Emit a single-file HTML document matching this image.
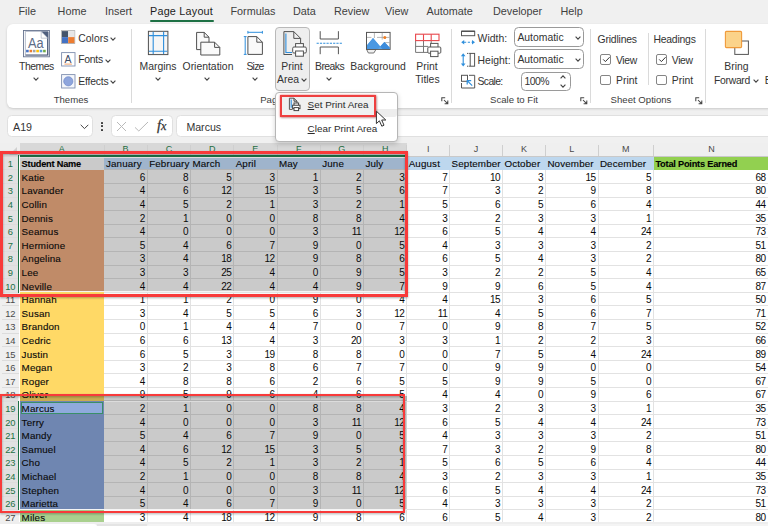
<!DOCTYPE html>
<html lang="en">
<head>
<meta charset="utf-8">
<title>Excel - Set Print Area</title>
<style>
html,body{margin:0;padding:0;}
body{width:768px;height:526px;overflow:hidden;background:#f0f0f0;position:relative;font-family:"Liberation Sans",sans-serif;color:#3a3a3a;}
#app{position:absolute;left:0;top:0;width:768px;height:526px;overflow:hidden;}
#app div,#app svg{position:absolute;}
#sheet{left:0;top:0;width:768px;height:526px;}
.tab{top:3.2px;height:16px;line-height:16px;font-size:10.8px;color:#404040;white-space:nowrap;}
.lbl{font-size:10.4px;line-height:13px;color:#333;white-space:nowrap;text-align:center;}
.lbl.l{text-align:left;}
.grp{font-size:9.6px;line-height:12px;color:#3c3c3c;white-space:nowrap;text-align:center;}
.sep{width:1px;background:#dadada;}
.ch{height:12px;line-height:12px;font-size:9px;text-align:center;}
.rn{left:2.5px;width:15.5px;height:13.6px;line-height:15.6px;font-size:9.4px;text-align:center;letter-spacing:-.1px;}
.c{height:13.6px;line-height:15.6px;font-size:9.2px;color:#0a0a0a;white-space:nowrap;}
.c.t{font-size:9.8px;letter-spacing:.15px;line-height:15.8px;-webkit-text-stroke:.12px #0a0a0a;}
.c.n{text-align:right;font-size:10px;letter-spacing:-.45px;line-height:15.2px;}
.c.b{font-weight:bold;font-size:9.2px;letter-spacing:-.2px;color:#000;line-height:16.4px;}
.inp{border:1px solid #9a9a9a;border-radius:4.5px;box-sizing:border-box;background:#fff;}
.cb{width:10.5px;height:10.5px;border:1px solid #858585;border-radius:2px;box-sizing:border-box;background:#fff;}
</style>
</head>
<body>
<div id="app">

<!-- ======= TAB BAR ======= -->
<div class="tab" style="left:18.5px">File</div>
<div class="tab" style="left:57.6px">Home</div>
<div class="tab" style="left:105px">Insert</div>
<div class="tab" style="left:150px;color:#1c1c1c;letter-spacing:.22px">Page Layout</div>
<div style="left:150px;top:20.2px;width:64px;height:1.8px;background:#1e7145;border-radius:1px"></div>
<div class="tab" style="left:230.5px">Formulas</div>
<div class="tab" style="left:293px">Data</div>
<div class="tab" style="left:334px">Review</div>
<div class="tab" style="left:385px">View</div>
<div class="tab" style="left:426.5px">Automate</div>
<div class="tab" style="left:493px">Developer</div>
<div class="tab" style="left:560.5px">Help</div>

<!-- ======= RIBBON PANEL ======= -->
<div style="left:7px;top:23.8px;width:780px;height:84.6px;background:#fff;border-radius:6px;box-shadow:0 1px 2.5px rgba(0,0,0,.16)"></div>

<!-- Themes group -->
<svg style="left:22px;top:28.6px" width="30" height="30" viewBox="0 0 30 30">
  <rect x="1.5" y="1.5" width="25.9" height="26.3" fill="#f4f5f8" stroke="#66738f" stroke-width=".9"/>
  <rect x="3.3" y="2.7" width="22.6" height="23.5" fill="#fff" stroke="#9aa4b8" stroke-width=".6"/>
  <path d="M25.7 3 V26 H3.6" fill="none" stroke="#4c5b78" stroke-width="1.2"/>
  <path d="M19.2 2.6 H26.1 V9.4 Z" fill="#4f5f7e"/>
  <path d="M19.2 2.6 V9.2 H25.9 Z" fill="#fff" stroke="#8c97ad" stroke-width=".5"/>
  <text x="5.9" y="18.7" font-family="Liberation Sans, sans-serif" font-size="15.4" fill="#5d6c86" textLength="15.6" lengthAdjust="spacingAndGlyphs">Aa</text>
  <rect x="4.1" y="20.8" width="2.6" height="2.5" fill="#4472c4"/>
  <rect x="7.5" y="20.8" width="2.6" height="2.5" fill="#ed7d31"/>
  <rect x="10.9" y="20.8" width="2.6" height="2.5" fill="#a5a5a5"/>
  <rect x="14.3" y="20.8" width="2.6" height="2.5" fill="#ffc000"/>
  <rect x="17.7" y="20.8" width="2.6" height="2.5" fill="#5b9bd5"/>
  <rect x="21.1" y="20.8" width="2.6" height="2.5" fill="#70ad47"/>
</svg>
<div class="lbl" style="left:11.4px;top:59.8px;width:50px;letter-spacing:-.5px">Themes</div>
<svg class="chev" style="left:33px;top:77.4px" width="6" height="4" viewBox="0 0 6 4"><path d="M.6 .7 L3 3.1 L5.4 .7" fill="none" stroke="#444" stroke-width="1.15"/></svg>

<svg style="left:60.6px;top:30.4px" width="15" height="15" viewBox="0 0 15 15">
  <rect x=".6" y=".7" width="13.2" height="12.8" fill="#fff" stroke="#9a9a9a" stroke-width=".7"/>
  <rect x="1" y="1.1" width="6.2" height="6" fill="#44546a"/>
  <rect x="7.2" y="1.1" width="6.2" height="6" fill="#e7e6e6"/>
  <rect x="1" y="7.1" width="6.2" height="6" fill="#4472c4"/>
  <rect x="7.2" y="7.1" width="6.2" height="6" fill="#ed7d31"/>
</svg>
<div class="lbl l" style="left:78.3px;top:31.6px">Colors</div>
<svg style="left:109.6px;top:36.8px" width="6" height="4" viewBox="0 0 6 4"><path d="M.6 .7 L3 3.1 L5.4 .7" fill="none" stroke="#444" stroke-width="1.15"/></svg>

<svg style="left:60.6px;top:52px" width="15" height="15" viewBox="0 0 15 15">
  <rect x=".6" y=".6" width="13.4" height="13.4" fill="#fff" stroke="#7f8fb0" stroke-width=".9"/>
  <text x="3.6" y="11" font-family="Liberation Sans, sans-serif" font-size="10.4" fill="#3d4a63">A</text>
  <rect x="3.4" y="11.6" width="7.6" height="1" fill="#f2a36b"/>
</svg>
<div class="lbl l" style="left:78.3px;top:53.4px;letter-spacing:-.3px">Fonts</div>
<svg style="left:105.2px;top:58.6px" width="6" height="4" viewBox="0 0 6 4"><path d="M.6 .7 L3 3.1 L5.4 .7" fill="none" stroke="#444" stroke-width="1.15"/></svg>

<svg style="left:60.6px;top:73.8px" width="15" height="15" viewBox="0 0 15 15">
  <rect x=".6" y=".6" width="13.4" height="13.4" fill="#f4f6fb" stroke="#7f8fb0" stroke-width=".9"/>
  <circle cx="7.3" cy="7.3" r="4.6" fill="#8ea5dc" stroke="#6f88c8" stroke-width=".7"/>
</svg>
<div class="lbl l" style="left:78.3px;top:75.2px;letter-spacing:-.2px">Effects</div>
<svg style="left:110.2px;top:80.4px" width="6" height="4" viewBox="0 0 6 4"><path d="M.6 .7 L3 3.1 L5.4 .7" fill="none" stroke="#444" stroke-width="1.15"/></svg>
<div class="grp" style="left:45px;top:94.4px;width:52px">Themes</div>
<div class="sep" style="left:131px;top:28.5px;height:74.5px"></div>

<!-- Page Setup group -->
<svg style="left:147px;top:30px" width="23" height="27" viewBox="0 0 23 27">
  <rect x="1.4" y="1.3" width="19.5" height="23.3" fill="#f6f6f6" stroke="#4f4f4f" stroke-width="1"/>
  <path d="M6.2 1.8 V24.1 M16.6 1.8 V24.1 M1.9 5.6 H20.4 M1.9 21.3 H20.4" stroke="#2f8fdc" stroke-width="1.1" fill="none"/>
</svg>
<div class="lbl" style="left:133px;top:59.8px;width:50px">Margins</div>
<svg style="left:155.2px;top:77.4px" width="6" height="4" viewBox="0 0 6 4"><path d="M.6 .7 L3 3.1 L5.4 .7" fill="none" stroke="#444" stroke-width="1.15"/></svg>

<svg style="left:195px;top:30.5px" width="27" height="26" viewBox="0 0 27 26">
  <path d="M1.6 1.4 H9.2 L14 6.2 V18.6 H1.6 Z" fill="#fafafa" stroke="#505050" stroke-width="1"/>
  <path d="M9.2 1.4 V6.2 H14" fill="none" stroke="#505050" stroke-width="1"/>
  <path d="M5.8 11.2 H19.6 L24.8 16.4 V24 H5.8 Z" fill="#fafafa" stroke="#505050" stroke-width="1"/>
  <path d="M19.6 11.2 V16.4 H24.8" fill="none" stroke="#505050" stroke-width="1"/>
</svg>
<div class="lbl" style="left:178px;top:59.8px;width:60px">Orientation</div>
<svg style="left:204.2px;top:77.4px" width="6" height="4" viewBox="0 0 6 4"><path d="M.6 .7 L3 3.1 L5.4 .7" fill="none" stroke="#444" stroke-width="1.15"/></svg>

<svg style="left:242.5px;top:30px" width="22" height="27" viewBox="0 0 22 27">
  <path d="M4.9 6.6 H13.8 L19.4 12.2 V24.4 H4.9 Z" fill="#fafafa" stroke="#505050" stroke-width="1"/>
  <path d="M13.8 6.6 V12.2 H19.4" fill="none" stroke="#505050" stroke-width="1"/>
  <path d="M4.9 2.3 H19.4 M4.9 .9 V3.7 M19.4 .9 V3.7 M2.2 6.6 V24.4 M.8 6.6 H3.6 M.8 24.4 H3.6" stroke="#2f8fdc" stroke-width="1" fill="none"/>
</svg>
<div class="lbl" style="left:235px;top:59.8px;width:40px;letter-spacing:-.75px">Size</div>
<svg style="left:251.6px;top:77.4px" width="6" height="4" viewBox="0 0 6 4"><path d="M.6 .7 L3 3.1 L5.4 .7" fill="none" stroke="#444" stroke-width="1.15"/></svg>

<!-- Print Area (pressed) -->
<div style="left:274.6px;top:27.3px;width:35px;height:63.4px;background:#eeeeee;border:1px solid #b9b9b9;border-radius:4px;box-sizing:border-box"></div>
<svg style="left:281px;top:29.5px" width="28" height="29" viewBox="0 0 28 29">
  <path d="M2.9 1.6 H12.8 L19.6 8.4 V13 M11 24.5 H2.9 Z" fill="none" stroke="#505050" stroke-width="1"/>
  <path d="M2.9 1.6 V24.5 H11" fill="none" stroke="#505050" stroke-width="1"/>
  <path d="M12.8 1.6 V8.4 H19.6" fill="none" stroke="#505050" stroke-width="1"/>
  <path d="M4.9 3.6 V22.5 H11" fill="none" stroke="#2f8fdc" stroke-width="1.1"/>
  <rect x="14.6" y="13.6" width="7.8" height="4.4" fill="#fff" stroke="#505050" stroke-width="1"/>
  <rect x="11.7" y="17" width="13.6" height="6" rx="1.2" fill="#fff" stroke="#505050" stroke-width="1"/>
  <rect x="14.6" y="21" width="7.8" height="5.2" fill="#fff" stroke="#505050" stroke-width="1"/>
</svg>
<div class="lbl" style="left:272px;top:59.8px;width:40px">Print</div>
<div class="lbl" style="left:268px;top:72.9px;width:40px">Area</div>
<svg style="left:300.6px;top:77.8px" width="6" height="4" viewBox="0 0 6 4"><path d="M.6 .7 L3 3.1 L5.4 .7" fill="none" stroke="#444" stroke-width="1.15"/></svg>

<!-- Breaks -->
<svg style="left:315px;top:29.5px" width="29" height="26" viewBox="0 0 29 26">
  <path d="M5.2 1.2 V9 H23.4 V1.2" fill="none" stroke="#555" stroke-width="1"/>
  <path d="M5.2 24.2 V17 H23.4 V24.2" fill="none" stroke="#555" stroke-width="1"/>
  <path d="M1.6 13.2 H27" fill="none" stroke="#2f8fdc" stroke-width="1.1" stroke-dasharray="2.2 1.1"/>
</svg>
<div class="lbl" style="left:309.6px;top:59.8px;width:40px;letter-spacing:-.55px">Breaks</div>
<svg style="left:326.3px;top:77.4px" width="6" height="4" viewBox="0 0 6 4"><path d="M.6 .7 L3 3.1 L5.4 .7" fill="none" stroke="#444" stroke-width="1.15"/></svg>

<!-- Background -->
<svg style="left:365px;top:31px" width="27" height="24" viewBox="0 0 27 24">
  <path d="M1.6 18.4 H11 L8.8 22 H3.4 Z" fill="#f0f0f0" stroke="#666" stroke-width=".9"/>
  <rect x="1.5" y="1.4" width="23.6" height="17" fill="#fff" stroke="#555" stroke-width="1"/>
  <path d="M9.4 1.9 V7 M17.2 1.9 V8.6 M2 6.4 H6.4 M12 6.4 H24.6 M19 11.6 H24.6" stroke="#9a9a9a" stroke-width=".7" fill="none"/>
  <path d="M2 17.9 V14.2 L8 7 L15.2 15.4 L19.4 11 L24.6 16.4 V17.9 Z" fill="#5aa5e8"/>
  <path d="M8 7 L15.2 15.4 L13 17.9 H2 V14.2 Z" fill="#4a98e2"/>
  <path d="M15.2 15.4 L19.4 11 L24.6 16.4 V17.9 H17.4 Z" fill="#3d8cdb"/>
  <circle cx="19.8" cy="6.4" r="1.5" fill="#ef7d22"/>
</svg>
<div class="lbl" style="left:348px;top:59.8px;width:60px">Background</div>

<!-- Print Titles -->
<svg style="left:414px;top:33px" width="28" height="25" viewBox="0 0 28 25">
  <path d="M1.6 7.6 V19.4 H14 M9.5 7.6 V19.4 M17.2 7.6 V10.4 M1.6 13.4 H14" fill="none" stroke="#777" stroke-width="1"/>
  <rect x="1.6" y="1.2" width="23.4" height="6.4" fill="#fff" stroke="#e8474c" stroke-width="1.1"/>
  <path d="M9.5 1.2 V7.6 M17.2 1.2 V7.6" stroke="#e8474c" stroke-width="1.1"/>
  <rect x="16.6" y="10.4" width="7.4" height="4.6" fill="#fff" stroke="#555" stroke-width="1"/>
  <rect x="13.8" y="14" width="13" height="6.2" rx="1" fill="#fff" stroke="#555" stroke-width="1"/>
  <rect x="16.6" y="18.2" width="7.4" height="5.4" fill="#fff" stroke="#555" stroke-width="1"/>
</svg>
<div class="lbl" style="left:407px;top:59.8px;width:40px">Print</div>
<div class="lbl" style="left:407.4px;top:72.9px;width:40px">Titles</div>
<div class="grp" style="left:260.2px;top:94.4px;width:60px;text-align:left">Page Setup</div>
<svg style="left:441.4px;top:96.6px" width="8" height="8" viewBox="0 0 8 8"><path d="M.8 4.2 V.8 H4.2 M3 3 L6.6 6.6 M6.8 3.6 V6.8 H3.6" fill="none" stroke="#444" stroke-width="1.05"/></svg>
<div class="sep" style="left:451px;top:28.5px;height:74.5px"></div>

<!-- Scale to Fit -->
<svg style="left:460px;top:29.6px" width="17" height="16" viewBox="0 0 17 16">
  <rect x="1.5" y="1.3" width="13.2" height="4.4" fill="#fff" stroke="#555" stroke-width="1"/>
  <path d="M1.5 1.2 H14.7" stroke="#4a4a4a" stroke-width="1.2"/>
  <path d="M4 12.3 H12.4" stroke="#2f8fdc" stroke-width="1.1" stroke-dasharray="2.2 1.6" fill="none"/>
  <path d="M4.2 10 L1.2 12.3 L4.2 14.6 Z M12 10 L15 12.3 L12 14.6 Z" fill="#2f8fdc"/>
</svg>
<div class="lbl l" style="left:477.6px;top:31.6px">Width:</div>
<div class="inp" style="left:514.2px;top:27.4px;width:69.8px;height:19.8px"></div>
<div class="lbl l" style="left:517.4px;top:30.8px;color:#333">Automatic</div>
<svg style="left:575px;top:36.2px" width="6" height="4" viewBox="0 0 6 4"><path d="M.6 .7 L3 3.1 L5.4 .7" fill="none" stroke="#444" stroke-width="1.15"/></svg>

<svg style="left:460px;top:51.6px" width="17" height="16" viewBox="0 0 17 16">
  <path d="M3.2 3.4 V12.4" stroke="#2f8fdc" stroke-width="1.1" fill="none"/>
  <path d="M.9 4.2 L3.2 1.2 L5.5 4.2 Z M.9 11.6 L3.2 14.6 L5.5 11.6 Z" fill="#2f8fdc"/>
  <rect x="10.2" y="1.4" width="4.4" height="12.8" fill="#fff" stroke="#555" stroke-width="1"/>
  <path d="M7 1.4 H10.2 M7 14.2 H10.2" stroke="#555" stroke-width="1" stroke-dasharray="1.4 .8"/>
</svg>
<div class="lbl l" style="left:477.6px;top:53.6px">Height:</div>
<div class="inp" style="left:514.2px;top:49.4px;width:69.8px;height:19.8px"></div>
<div class="lbl l" style="left:517.4px;top:52.8px;color:#333">Automatic</div>
<svg style="left:575px;top:58.2px" width="6" height="4" viewBox="0 0 6 4"><path d="M.6 .7 L3 3.1 L5.4 .7" fill="none" stroke="#444" stroke-width="1.15"/></svg>

<svg style="left:460px;top:73.6px" width="17" height="16" viewBox="0 0 17 16">
  <path d="M1.5 9 V14 H14.7 V1.3 H9" fill="none" stroke="#555" stroke-width="1"/>
  <rect x="1.5" y="1.3" width="6" height="6" fill="#fff" stroke="#555" stroke-width="1"/>
  <path d="M12.2 11.6 L7.4 6.8 M7.2 10.6 V6.6 H11.2" fill="none" stroke="#2f8fdc" stroke-width="1.2"/>
</svg>
<div class="lbl l" style="left:477.6px;top:75.4px;letter-spacing:-.65px">Scale:</div>
<div class="inp" style="left:521px;top:71.8px;width:49.6px;height:19.4px"></div>
<div class="lbl l" style="left:524.4px;top:75.2px;color:#333;letter-spacing:-.5px">100%</div>
<svg style="left:559.6px;top:75px" width="6" height="4" viewBox="0 0 6 4"><path d="M.6 3.3 L3 .9 L5.4 3.3" fill="none" stroke="#444" stroke-width="1.15"/></svg>
<svg style="left:559.6px;top:84px" width="6" height="4" viewBox="0 0 6 4"><path d="M.6 .7 L3 3.1 L5.4 .7" fill="none" stroke="#444" stroke-width="1.15"/></svg>
<div class="grp" style="left:484px;top:94.4px;width:60px">Scale to Fit</div>
<svg style="left:580.4px;top:96.6px" width="8" height="8" viewBox="0 0 8 8"><path d="M.8 4.2 V.8 H4.2 M3 3 L6.6 6.6 M6.8 3.6 V6.8 H3.6" fill="none" stroke="#444" stroke-width="1.05"/></svg>
<div class="sep" style="left:590.4px;top:28.5px;height:74.5px"></div>

<!-- Sheet Options -->
<div class="lbl l" style="left:597.6px;top:33px;letter-spacing:-.2px">Gridlines</div>
<div class="lbl l" style="left:653.4px;top:33px;letter-spacing:-.2px">Headings</div>
<div class="cb" style="left:600.4px;top:54.4px"></div>
<svg style="left:601.6px;top:56.4px" width="9" height="7" viewBox="0 0 9 7"><path d="M1.2 3.4 L3.4 5.6 L7.6 1.2" fill="none" stroke="#333" stroke-width="1"/></svg>
<div class="lbl l" style="left:616px;top:53.6px;letter-spacing:-.4px">View</div>
<div class="cb" style="left:600.4px;top:74.8px"></div>
<div class="lbl l" style="left:616px;top:74px">Print</div>
<div class="sep" style="left:648.2px;top:33px;height:52px"></div>
<div class="cb" style="left:656.4px;top:54.4px"></div>
<svg style="left:657.6px;top:56.4px" width="9" height="7" viewBox="0 0 9 7"><path d="M1.2 3.4 L3.4 5.6 L7.6 1.2" fill="none" stroke="#333" stroke-width="1"/></svg>
<div class="lbl l" style="left:671.8px;top:53.6px;letter-spacing:-.4px">View</div>
<div class="cb" style="left:656.4px;top:74.8px"></div>
<div class="lbl l" style="left:671.8px;top:74px">Print</div>
<div class="grp" style="left:605px;top:94.4px;width:72px">Sheet Options</div>
<svg style="left:695.4px;top:96.6px" width="8" height="8" viewBox="0 0 8 8"><path d="M.8 4.2 V.8 H4.2 M3 3 L6.6 6.6 M6.8 3.6 V6.8 H3.6" fill="none" stroke="#444" stroke-width="1.05"/></svg>
<div class="sep" style="left:704.6px;top:28.5px;height:74.5px"></div>

<!-- Arrange -->
<svg style="left:724px;top:30px" width="26" height="26" viewBox="0 0 26 26">
  <rect x="10.8" y="11" width="13.6" height="13.4" fill="#fff" stroke="#555" stroke-width="1"/>
  <rect x="1.4" y="1.4" width="16.2" height="16.2" rx="1" fill="#fbd38a" stroke="#f09a3a" stroke-width="1.1"/>
</svg>
<div class="lbl" style="left:716.5px;top:60.4px;width:40px">Bring</div>
<div class="lbl l" style="left:714px;top:74px;letter-spacing:-.3px">Forward</div>
<svg style="left:752.6px;top:79px" width="6" height="4" viewBox="0 0 6 4"><path d="M.6 .7 L3 3.1 L5.4 .7" fill="none" stroke="#444" stroke-width="1.15"/></svg>
<div class="lbl l" style="left:764.8px;top:74px">B</div>

<!-- ======= FORMULA BAR ======= -->
<div class="inp" style="left:7.4px;top:115.4px;width:85.2px;height:21.8px;border-color:#e0e0e0;border-radius:4.5px"></div>
<div class="lbl l" style="left:13px;top:121.2px;font-size:10.7px;color:#333">A19</div>
<svg style="left:79.6px;top:124.4px" width="9" height="6" viewBox="0 0 9 6"><path d="M.7 .8 L4.5 4.6 L8.3 .8" fill="none" stroke="#444" stroke-width="1"/></svg>
<div style="left:100.8px;top:122px;width:2px;height:2px;background:#3c3c3c;border-radius:.6px"></div>
<div style="left:100.8px;top:125.35px;width:2px;height:2px;background:#3c3c3c;border-radius:.6px"></div>
<div style="left:100.8px;top:128.7px;width:2px;height:2px;background:#3c3c3c;border-radius:.6px"></div>
<div class="inp" style="left:110.6px;top:115.4px;width:62px;height:21.8px;border-color:#e0e0e0;border-radius:4.5px"></div>
<svg style="left:116px;top:121.4px" width="11" height="11" viewBox="0 0 11 11"><path d="M1 1 L10 10 M10 1 L1 10" stroke="#b9b9b9" stroke-width="1" fill="none"/></svg>
<svg style="left:134px;top:121.4px" width="15" height="11" viewBox="0 0 15 11"><path d="M1 6.4 L4.8 10 L14 1" stroke="#b9b9b9" stroke-width="1" fill="none"/></svg>
<div style="left:157px;top:117.1px;font-family:'Liberation Serif',serif;font-style:italic;font-size:14.6px;line-height:16px;color:#333;-webkit-text-stroke:.25px #333;letter-spacing:-.1px">f<span style="font-size:12.2px">x</span></div>
<div class="inp" style="left:176.2px;top:115.4px;width:620px;height:21.8px;border-color:#e0e0e0;border-radius:4.5px"></div>
<div class="lbl l" style="left:186.4px;top:121.2px;font-size:10.6px;color:#333">Marcus</div>

<div id="sheet">
<div style="left:0px;top:143px;width:768px;height:383px;background:#fff"></div>
<div style="left:0px;top:143px;width:768px;height:13.2px;background:#efefef"></div>
<div style="left:19.7px;top:143px;width:387.05px;height:13.2px;background:#d8d8d8"></div>
<div class="ch" style="left:19.7px;top:143.1px;width:84.3px;color:#1e6e42">A</div>
<div class="ch" style="left:104px;top:143.1px;width:43.25px;color:#1e6e42">B</div>
<div class="ch" style="left:147.25px;top:143.1px;width:43.25px;color:#1e6e42">C</div>
<div class="ch" style="left:190.5px;top:143.1px;width:43.25px;color:#1e6e42">D</div>
<div class="ch" style="left:233.75px;top:143.1px;width:43.25px;color:#1e6e42">E</div>
<div class="ch" style="left:277px;top:143.1px;width:43.25px;color:#1e6e42">F</div>
<div class="ch" style="left:320.25px;top:143.1px;width:43.25px;color:#1e6e42">G</div>
<div class="ch" style="left:363.5px;top:143.1px;width:43.25px;color:#1e6e42">H</div>
<div class="ch" style="left:406.75px;top:143.1px;width:42.85px;color:#4a4a4a">I</div>
<div class="ch" style="left:449.6px;top:143.1px;width:52.9px;color:#4a4a4a">J</div>
<div class="ch" style="left:502.5px;top:143.1px;width:43px;color:#4a4a4a">K</div>
<div class="ch" style="left:545.5px;top:143.1px;width:52.5px;color:#4a4a4a">L</div>
<div class="ch" style="left:598px;top:143.1px;width:55.5px;color:#4a4a4a">M</div>
<div class="ch" style="left:653.5px;top:143.1px;width:116px;color:#4a4a4a">N</div>
<div style="left:19.2px;top:145px;width:1px;height:11px;background:#cfcfcf"></div>
<div style="left:103.5px;top:145px;width:1px;height:11px;background:#cfcfcf"></div>
<div style="left:146.75px;top:145px;width:1px;height:11px;background:#cfcfcf"></div>
<div style="left:190px;top:145px;width:1px;height:11px;background:#cfcfcf"></div>
<div style="left:233.25px;top:145px;width:1px;height:11px;background:#cfcfcf"></div>
<div style="left:276.5px;top:145px;width:1px;height:11px;background:#cfcfcf"></div>
<div style="left:319.75px;top:145px;width:1px;height:11px;background:#cfcfcf"></div>
<div style="left:363px;top:145px;width:1px;height:11px;background:#cfcfcf"></div>
<div style="left:406.25px;top:145px;width:1px;height:11px;background:#cfcfcf"></div>
<div style="left:449.1px;top:145px;width:1px;height:11px;background:#cfcfcf"></div>
<div style="left:502px;top:145px;width:1px;height:11px;background:#cfcfcf"></div>
<div style="left:545px;top:145px;width:1px;height:11px;background:#cfcfcf"></div>
<div style="left:597.5px;top:145px;width:1px;height:11px;background:#cfcfcf"></div>
<div style="left:653px;top:145px;width:1px;height:11px;background:#cfcfcf"></div>
<div style="left:19.7px;top:154.7px;width:387.05px;height:1.9px;background:#1e7145"></div>
<div style="left:0px;top:143px;width:19.7px;height:8px;background:#efefef"></div>
<div style="left:0px;top:151px;width:19.7px;height:5.2px;background:#e4e4e4"></div>
<svg style="position:absolute;left:8px;top:146px" width="10" height="10" viewBox="0 0 10 10"><path d="M9 1 L9 9 L1 9 Z" fill="#d0d0d0"/></svg>
<div style="left:0px;top:156.2px;width:18.7px;height:369.8px;background:#efefef"></div>
<div style="left:0px;top:156.2px;width:18.7px;height:136px;background:#e1e1e1"></div>
<div style="left:0px;top:401px;width:18.7px;height:108.8px;background:#e1e1e1"></div>
<div style="left:19.7px;top:292.2px;width:84.3px;height:108.8px;background:#ffd966"></div>
<div style="left:19.7px;top:509.8px;width:84.3px;height:13.6px;background:#a9d08e"></div>
<div style="left:406.75px;top:156.7px;width:246.75px;height:13.1px;background:#bdd7ee"></div>
<div style="left:653.5px;top:156.7px;width:114.5px;height:13.1px;background:#92d050"></div>
<div style="left:406.75px;top:155.9px;width:361.25px;height:0.8px;background:#c9c9c9"></div>
<div style="left:19.7px;top:157.2px;width:387.05px;height:135px;background:#cacaca"></div>
<div style="left:104px;top:157.2px;width:302.75px;height:12.6px;background:#9fb4cc"></div>
<div style="left:19.7px;top:156.6px;width:387.05px;height:0.7px;background:#dedede"></div>
<div style="left:19.7px;top:169.8px;width:84.3px;height:122.4px;background:#c08b68"></div>
<div style="left:19.7px;top:401px;width:387.25px;height:108.8px;background:#cacaca"></div>
<div style="left:19.7px;top:401px;width:84.3px;height:108.8px;background:#6f86b1"></div>
<div style="left:104px;top:169.3px;width:302.75px;height:1px;background:#b4b4b4"></div>
<div style="left:104px;top:182.9px;width:302.75px;height:1px;background:#b4b4b4"></div>
<div style="left:406.75px;top:182.9px;width:361.25px;height:1px;background:#e2e2e2"></div>
<div style="left:104px;top:196.5px;width:302.75px;height:1px;background:#b4b4b4"></div>
<div style="left:406.75px;top:196.5px;width:361.25px;height:1px;background:#e2e2e2"></div>
<div style="left:104px;top:210.1px;width:302.75px;height:1px;background:#b4b4b4"></div>
<div style="left:406.75px;top:210.1px;width:361.25px;height:1px;background:#e2e2e2"></div>
<div style="left:104px;top:223.7px;width:302.75px;height:1px;background:#b4b4b4"></div>
<div style="left:406.75px;top:223.7px;width:361.25px;height:1px;background:#e2e2e2"></div>
<div style="left:104px;top:237.3px;width:302.75px;height:1px;background:#b4b4b4"></div>
<div style="left:406.75px;top:237.3px;width:361.25px;height:1px;background:#e2e2e2"></div>
<div style="left:104px;top:250.9px;width:302.75px;height:1px;background:#b4b4b4"></div>
<div style="left:406.75px;top:250.9px;width:361.25px;height:1px;background:#e2e2e2"></div>
<div style="left:104px;top:264.5px;width:302.75px;height:1px;background:#b4b4b4"></div>
<div style="left:406.75px;top:264.5px;width:361.25px;height:1px;background:#e2e2e2"></div>
<div style="left:104px;top:278.1px;width:302.75px;height:1px;background:#b4b4b4"></div>
<div style="left:406.75px;top:278.1px;width:361.25px;height:1px;background:#e2e2e2"></div>
<div style="left:104px;top:291.7px;width:302.75px;height:1px;background:#e2e2e2"></div>
<div style="left:406.75px;top:291.7px;width:361.25px;height:1px;background:#e2e2e2"></div>
<div style="left:104px;top:305.3px;width:302.75px;height:1px;background:#e2e2e2"></div>
<div style="left:406.75px;top:305.3px;width:361.25px;height:1px;background:#e2e2e2"></div>
<div style="left:104px;top:318.9px;width:302.75px;height:1px;background:#e2e2e2"></div>
<div style="left:406.75px;top:318.9px;width:361.25px;height:1px;background:#e2e2e2"></div>
<div style="left:104px;top:332.5px;width:302.75px;height:1px;background:#e2e2e2"></div>
<div style="left:406.75px;top:332.5px;width:361.25px;height:1px;background:#e2e2e2"></div>
<div style="left:104px;top:346.1px;width:302.75px;height:1px;background:#e2e2e2"></div>
<div style="left:406.75px;top:346.1px;width:361.25px;height:1px;background:#e2e2e2"></div>
<div style="left:104px;top:359.7px;width:302.75px;height:1px;background:#e2e2e2"></div>
<div style="left:406.75px;top:359.7px;width:361.25px;height:1px;background:#e2e2e2"></div>
<div style="left:104px;top:373.3px;width:302.75px;height:1px;background:#e2e2e2"></div>
<div style="left:406.75px;top:373.3px;width:361.25px;height:1px;background:#e2e2e2"></div>
<div style="left:104px;top:386.9px;width:302.75px;height:1px;background:#e2e2e2"></div>
<div style="left:406.75px;top:386.9px;width:361.25px;height:1px;background:#e2e2e2"></div>
<div style="left:104px;top:400.5px;width:302.75px;height:1px;background:#e2e2e2"></div>
<div style="left:406.75px;top:400.5px;width:361.25px;height:1px;background:#e2e2e2"></div>
<div style="left:104px;top:414.1px;width:302.75px;height:1px;background:#b4b4b4"></div>
<div style="left:406.75px;top:414.1px;width:361.25px;height:1px;background:#e2e2e2"></div>
<div style="left:104px;top:427.7px;width:302.75px;height:1px;background:#b4b4b4"></div>
<div style="left:406.75px;top:427.7px;width:361.25px;height:1px;background:#e2e2e2"></div>
<div style="left:104px;top:441.3px;width:302.75px;height:1px;background:#b4b4b4"></div>
<div style="left:406.75px;top:441.3px;width:361.25px;height:1px;background:#e2e2e2"></div>
<div style="left:104px;top:454.9px;width:302.75px;height:1px;background:#b4b4b4"></div>
<div style="left:406.75px;top:454.9px;width:361.25px;height:1px;background:#e2e2e2"></div>
<div style="left:104px;top:468.5px;width:302.75px;height:1px;background:#b4b4b4"></div>
<div style="left:406.75px;top:468.5px;width:361.25px;height:1px;background:#e2e2e2"></div>
<div style="left:104px;top:482.1px;width:302.75px;height:1px;background:#b4b4b4"></div>
<div style="left:406.75px;top:482.1px;width:361.25px;height:1px;background:#e2e2e2"></div>
<div style="left:104px;top:495.7px;width:302.75px;height:1px;background:#b4b4b4"></div>
<div style="left:406.75px;top:495.7px;width:361.25px;height:1px;background:#e2e2e2"></div>
<div style="left:104px;top:509.3px;width:302.75px;height:1px;background:#e2e2e2"></div>
<div style="left:406.75px;top:509.3px;width:361.25px;height:1px;background:#e2e2e2"></div>
<div style="left:104px;top:522.9px;width:302.75px;height:1px;background:#e2e2e2"></div>
<div style="left:406.75px;top:522.9px;width:361.25px;height:1px;background:#e2e2e2"></div>
<div style="left:146.75px;top:169.8px;width:1px;height:122.4px;background:#b4b4b4"></div>
<div style="left:146.75px;top:292.2px;width:1px;height:108.8px;background:#e2e2e2"></div>
<div style="left:146.75px;top:401px;width:1px;height:108.8px;background:#b4b4b4"></div>
<div style="left:146.75px;top:509.8px;width:1px;height:13.6px;background:#e2e2e2"></div>
<div style="left:190px;top:169.8px;width:1px;height:122.4px;background:#b4b4b4"></div>
<div style="left:190px;top:292.2px;width:1px;height:108.8px;background:#e2e2e2"></div>
<div style="left:190px;top:401px;width:1px;height:108.8px;background:#b4b4b4"></div>
<div style="left:190px;top:509.8px;width:1px;height:13.6px;background:#e2e2e2"></div>
<div style="left:233.25px;top:169.8px;width:1px;height:122.4px;background:#b4b4b4"></div>
<div style="left:233.25px;top:292.2px;width:1px;height:108.8px;background:#e2e2e2"></div>
<div style="left:233.25px;top:401px;width:1px;height:108.8px;background:#b4b4b4"></div>
<div style="left:233.25px;top:509.8px;width:1px;height:13.6px;background:#e2e2e2"></div>
<div style="left:276.5px;top:169.8px;width:1px;height:122.4px;background:#b4b4b4"></div>
<div style="left:276.5px;top:292.2px;width:1px;height:108.8px;background:#e2e2e2"></div>
<div style="left:276.5px;top:401px;width:1px;height:108.8px;background:#b4b4b4"></div>
<div style="left:276.5px;top:509.8px;width:1px;height:13.6px;background:#e2e2e2"></div>
<div style="left:319.75px;top:169.8px;width:1px;height:122.4px;background:#b4b4b4"></div>
<div style="left:319.75px;top:292.2px;width:1px;height:108.8px;background:#e2e2e2"></div>
<div style="left:319.75px;top:401px;width:1px;height:108.8px;background:#b4b4b4"></div>
<div style="left:319.75px;top:509.8px;width:1px;height:13.6px;background:#e2e2e2"></div>
<div style="left:363px;top:169.8px;width:1px;height:122.4px;background:#b4b4b4"></div>
<div style="left:363px;top:292.2px;width:1px;height:108.8px;background:#e2e2e2"></div>
<div style="left:363px;top:401px;width:1px;height:108.8px;background:#b4b4b4"></div>
<div style="left:363px;top:509.8px;width:1px;height:13.6px;background:#e2e2e2"></div>
<div style="left:406.25px;top:169.8px;width:1px;height:122.4px;background:#b4b4b4"></div>
<div style="left:406.25px;top:292.2px;width:1px;height:108.8px;background:#e2e2e2"></div>
<div style="left:406.25px;top:401px;width:1px;height:108.8px;background:#d6d6d6"></div>
<div style="left:406.25px;top:509.8px;width:1px;height:13.6px;background:#e2e2e2"></div>
<div style="left:449.1px;top:169.8px;width:1px;height:353.6px;background:#e2e2e2"></div>
<div style="left:502px;top:169.8px;width:1px;height:353.6px;background:#e2e2e2"></div>
<div style="left:545px;top:169.8px;width:1px;height:353.6px;background:#e2e2e2"></div>
<div style="left:597.5px;top:169.8px;width:1px;height:353.6px;background:#e2e2e2"></div>
<div style="left:653px;top:169.8px;width:1px;height:353.6px;background:#e2e2e2"></div>
<div style="left:2px;top:155.7px;width:16.7px;height:1px;background:#dcdcdc"></div>
<div style="left:2px;top:169.3px;width:16.7px;height:1px;background:#dcdcdc"></div>
<div style="left:2px;top:182.9px;width:16.7px;height:1px;background:#dcdcdc"></div>
<div style="left:2px;top:196.5px;width:16.7px;height:1px;background:#dcdcdc"></div>
<div style="left:2px;top:210.1px;width:16.7px;height:1px;background:#dcdcdc"></div>
<div style="left:2px;top:223.7px;width:16.7px;height:1px;background:#dcdcdc"></div>
<div style="left:2px;top:237.3px;width:16.7px;height:1px;background:#dcdcdc"></div>
<div style="left:2px;top:250.9px;width:16.7px;height:1px;background:#dcdcdc"></div>
<div style="left:2px;top:264.5px;width:16.7px;height:1px;background:#dcdcdc"></div>
<div style="left:2px;top:278.1px;width:16.7px;height:1px;background:#dcdcdc"></div>
<div style="left:2px;top:291.7px;width:16.7px;height:1px;background:#dcdcdc"></div>
<div style="left:2px;top:305.3px;width:16.7px;height:1px;background:#dcdcdc"></div>
<div style="left:2px;top:318.9px;width:16.7px;height:1px;background:#dcdcdc"></div>
<div style="left:2px;top:332.5px;width:16.7px;height:1px;background:#dcdcdc"></div>
<div style="left:2px;top:346.1px;width:16.7px;height:1px;background:#dcdcdc"></div>
<div style="left:2px;top:359.7px;width:16.7px;height:1px;background:#dcdcdc"></div>
<div style="left:2px;top:373.3px;width:16.7px;height:1px;background:#dcdcdc"></div>
<div style="left:2px;top:386.9px;width:16.7px;height:1px;background:#dcdcdc"></div>
<div style="left:2px;top:400.5px;width:16.7px;height:1px;background:#dcdcdc"></div>
<div style="left:2px;top:414.1px;width:16.7px;height:1px;background:#dcdcdc"></div>
<div style="left:2px;top:427.7px;width:16.7px;height:1px;background:#dcdcdc"></div>
<div style="left:2px;top:441.3px;width:16.7px;height:1px;background:#dcdcdc"></div>
<div style="left:2px;top:454.9px;width:16.7px;height:1px;background:#dcdcdc"></div>
<div style="left:2px;top:468.5px;width:16.7px;height:1px;background:#dcdcdc"></div>
<div style="left:2px;top:482.1px;width:16.7px;height:1px;background:#dcdcdc"></div>
<div style="left:2px;top:495.7px;width:16.7px;height:1px;background:#dcdcdc"></div>
<div style="left:2px;top:509.3px;width:16.7px;height:1px;background:#dcdcdc"></div>
<div style="left:2px;top:522.9px;width:16.7px;height:1px;background:#dcdcdc"></div>
<div style="left:20.8px;top:402.3px;width:81.9px;height:11.4px;background:#8faadc;border:1px solid #3a8f68;box-sizing:border-box"></div>
<div class="rn" style="top:156.2px;color:#1e7145">1</div>
<div class="c t b" style="left:21.6px;top:156.2px">Student Name</div>
<div class="c t" style="left:105.9px;top:156.2px">January</div>
<div class="c t" style="left:149.15px;top:156.2px">February</div>
<div class="c t" style="left:192.4px;top:156.2px">March</div>
<div class="c t" style="left:235.65px;top:156.2px">April</div>
<div class="c t" style="left:278.9px;top:156.2px">May</div>
<div class="c t" style="left:322.15px;top:156.2px">June</div>
<div class="c t" style="left:365.4px;top:156.2px">July</div>
<div class="c t" style="left:408.65px;top:156.2px">August</div>
<div class="c t" style="left:451.5px;top:156.2px">September</div>
<div class="c t" style="left:504.4px;top:156.2px">October</div>
<div class="c t" style="left:547.4px;top:156.2px">November</div>
<div class="c t" style="left:599.9px;top:156.2px">December</div>
<div class="c t b" style="left:655.4px;top:156.2px">Total Points Earned</div>
<div class="rn" style="top:169.8px;color:#1e7145">2</div>
<div class="c t" style="left:21.6px;top:169.8px">Katie</div>
<div class="c n" style="left:104px;top:169.8px;width:40.95px">6</div>
<div class="c n" style="left:147.25px;top:169.8px;width:40.95px">8</div>
<div class="c n" style="left:190.5px;top:169.8px;width:40.95px">5</div>
<div class="c n" style="left:233.75px;top:169.8px;width:40.95px">3</div>
<div class="c n" style="left:277px;top:169.8px;width:40.95px">1</div>
<div class="c n" style="left:320.25px;top:169.8px;width:40.95px">2</div>
<div class="c n" style="left:363.5px;top:169.8px;width:40.95px">3</div>
<div class="c n" style="left:406.75px;top:169.8px;width:40.55px">7</div>
<div class="c n" style="left:449.6px;top:169.8px;width:50.6px">10</div>
<div class="c n" style="left:502.5px;top:169.8px;width:40.7px">3</div>
<div class="c n" style="left:545.5px;top:169.8px;width:50.2px">15</div>
<div class="c n" style="left:598px;top:169.8px;width:53.2px">5</div>
<div class="c n" style="left:653.5px;top:169.8px;width:112.2px">68</div>
<div class="rn" style="top:183.4px;color:#1e7145">3</div>
<div class="c t" style="left:21.6px;top:183.4px">Lavander</div>
<div class="c n" style="left:104px;top:183.4px;width:40.95px">4</div>
<div class="c n" style="left:147.25px;top:183.4px;width:40.95px">6</div>
<div class="c n" style="left:190.5px;top:183.4px;width:40.95px">12</div>
<div class="c n" style="left:233.75px;top:183.4px;width:40.95px">15</div>
<div class="c n" style="left:277px;top:183.4px;width:40.95px">3</div>
<div class="c n" style="left:320.25px;top:183.4px;width:40.95px">5</div>
<div class="c n" style="left:363.5px;top:183.4px;width:40.95px">6</div>
<div class="c n" style="left:406.75px;top:183.4px;width:40.55px">7</div>
<div class="c n" style="left:449.6px;top:183.4px;width:50.6px">3</div>
<div class="c n" style="left:502.5px;top:183.4px;width:40.7px">2</div>
<div class="c n" style="left:545.5px;top:183.4px;width:50.2px">9</div>
<div class="c n" style="left:598px;top:183.4px;width:53.2px">8</div>
<div class="c n" style="left:653.5px;top:183.4px;width:112.2px">80</div>
<div class="rn" style="top:197px;color:#1e7145">4</div>
<div class="c t" style="left:21.6px;top:197px">Collin</div>
<div class="c n" style="left:104px;top:197px;width:40.95px">4</div>
<div class="c n" style="left:147.25px;top:197px;width:40.95px">5</div>
<div class="c n" style="left:190.5px;top:197px;width:40.95px">2</div>
<div class="c n" style="left:233.75px;top:197px;width:40.95px">1</div>
<div class="c n" style="left:277px;top:197px;width:40.95px">3</div>
<div class="c n" style="left:320.25px;top:197px;width:40.95px">2</div>
<div class="c n" style="left:363.5px;top:197px;width:40.95px">1</div>
<div class="c n" style="left:406.75px;top:197px;width:40.55px">5</div>
<div class="c n" style="left:449.6px;top:197px;width:50.6px">6</div>
<div class="c n" style="left:502.5px;top:197px;width:40.7px">5</div>
<div class="c n" style="left:545.5px;top:197px;width:50.2px">6</div>
<div class="c n" style="left:598px;top:197px;width:53.2px">4</div>
<div class="c n" style="left:653.5px;top:197px;width:112.2px">44</div>
<div class="rn" style="top:210.6px;color:#1e7145">5</div>
<div class="c t" style="left:21.6px;top:210.6px">Dennis</div>
<div class="c n" style="left:104px;top:210.6px;width:40.95px">2</div>
<div class="c n" style="left:147.25px;top:210.6px;width:40.95px">1</div>
<div class="c n" style="left:190.5px;top:210.6px;width:40.95px">0</div>
<div class="c n" style="left:233.75px;top:210.6px;width:40.95px">0</div>
<div class="c n" style="left:277px;top:210.6px;width:40.95px">8</div>
<div class="c n" style="left:320.25px;top:210.6px;width:40.95px">8</div>
<div class="c n" style="left:363.5px;top:210.6px;width:40.95px">4</div>
<div class="c n" style="left:406.75px;top:210.6px;width:40.55px">3</div>
<div class="c n" style="left:449.6px;top:210.6px;width:50.6px">2</div>
<div class="c n" style="left:502.5px;top:210.6px;width:40.7px">3</div>
<div class="c n" style="left:545.5px;top:210.6px;width:50.2px">3</div>
<div class="c n" style="left:598px;top:210.6px;width:53.2px">1</div>
<div class="c n" style="left:653.5px;top:210.6px;width:112.2px">35</div>
<div class="rn" style="top:224.2px;color:#1e7145">6</div>
<div class="c t" style="left:21.6px;top:224.2px">Seamus</div>
<div class="c n" style="left:104px;top:224.2px;width:40.95px">4</div>
<div class="c n" style="left:147.25px;top:224.2px;width:40.95px">0</div>
<div class="c n" style="left:190.5px;top:224.2px;width:40.95px">0</div>
<div class="c n" style="left:233.75px;top:224.2px;width:40.95px">0</div>
<div class="c n" style="left:277px;top:224.2px;width:40.95px">3</div>
<div class="c n" style="left:320.25px;top:224.2px;width:40.95px">11</div>
<div class="c n" style="left:363.5px;top:224.2px;width:40.95px">12</div>
<div class="c n" style="left:406.75px;top:224.2px;width:40.55px">6</div>
<div class="c n" style="left:449.6px;top:224.2px;width:50.6px">5</div>
<div class="c n" style="left:502.5px;top:224.2px;width:40.7px">4</div>
<div class="c n" style="left:545.5px;top:224.2px;width:50.2px">4</div>
<div class="c n" style="left:598px;top:224.2px;width:53.2px">24</div>
<div class="c n" style="left:653.5px;top:224.2px;width:112.2px">73</div>
<div class="rn" style="top:237.8px;color:#1e7145">7</div>
<div class="c t" style="left:21.6px;top:237.8px">Hermione</div>
<div class="c n" style="left:104px;top:237.8px;width:40.95px">5</div>
<div class="c n" style="left:147.25px;top:237.8px;width:40.95px">4</div>
<div class="c n" style="left:190.5px;top:237.8px;width:40.95px">6</div>
<div class="c n" style="left:233.75px;top:237.8px;width:40.95px">7</div>
<div class="c n" style="left:277px;top:237.8px;width:40.95px">9</div>
<div class="c n" style="left:320.25px;top:237.8px;width:40.95px">0</div>
<div class="c n" style="left:363.5px;top:237.8px;width:40.95px">5</div>
<div class="c n" style="left:406.75px;top:237.8px;width:40.55px">4</div>
<div class="c n" style="left:449.6px;top:237.8px;width:50.6px">3</div>
<div class="c n" style="left:502.5px;top:237.8px;width:40.7px">3</div>
<div class="c n" style="left:545.5px;top:237.8px;width:50.2px">3</div>
<div class="c n" style="left:598px;top:237.8px;width:53.2px">2</div>
<div class="c n" style="left:653.5px;top:237.8px;width:112.2px">51</div>
<div class="rn" style="top:251.4px;color:#1e7145">8</div>
<div class="c t" style="left:21.6px;top:251.4px">Angelina</div>
<div class="c n" style="left:104px;top:251.4px;width:40.95px">3</div>
<div class="c n" style="left:147.25px;top:251.4px;width:40.95px">4</div>
<div class="c n" style="left:190.5px;top:251.4px;width:40.95px">18</div>
<div class="c n" style="left:233.75px;top:251.4px;width:40.95px">12</div>
<div class="c n" style="left:277px;top:251.4px;width:40.95px">9</div>
<div class="c n" style="left:320.25px;top:251.4px;width:40.95px">8</div>
<div class="c n" style="left:363.5px;top:251.4px;width:40.95px">6</div>
<div class="c n" style="left:406.75px;top:251.4px;width:40.55px">6</div>
<div class="c n" style="left:449.6px;top:251.4px;width:50.6px">5</div>
<div class="c n" style="left:502.5px;top:251.4px;width:40.7px">4</div>
<div class="c n" style="left:545.5px;top:251.4px;width:50.2px">3</div>
<div class="c n" style="left:598px;top:251.4px;width:53.2px">2</div>
<div class="c n" style="left:653.5px;top:251.4px;width:112.2px">80</div>
<div class="rn" style="top:265px;color:#1e7145">9</div>
<div class="c t" style="left:21.6px;top:265px">Lee</div>
<div class="c n" style="left:104px;top:265px;width:40.95px">3</div>
<div class="c n" style="left:147.25px;top:265px;width:40.95px">3</div>
<div class="c n" style="left:190.5px;top:265px;width:40.95px">25</div>
<div class="c n" style="left:233.75px;top:265px;width:40.95px">4</div>
<div class="c n" style="left:277px;top:265px;width:40.95px">0</div>
<div class="c n" style="left:320.25px;top:265px;width:40.95px">9</div>
<div class="c n" style="left:363.5px;top:265px;width:40.95px">5</div>
<div class="c n" style="left:406.75px;top:265px;width:40.55px">3</div>
<div class="c n" style="left:449.6px;top:265px;width:50.6px">2</div>
<div class="c n" style="left:502.5px;top:265px;width:40.7px">2</div>
<div class="c n" style="left:545.5px;top:265px;width:50.2px">5</div>
<div class="c n" style="left:598px;top:265px;width:53.2px">4</div>
<div class="c n" style="left:653.5px;top:265px;width:112.2px">65</div>
<div class="rn" style="top:278.6px;color:#1e7145">10</div>
<div class="c t" style="left:21.6px;top:278.6px">Neville</div>
<div class="c n" style="left:104px;top:278.6px;width:40.95px">4</div>
<div class="c n" style="left:147.25px;top:278.6px;width:40.95px">4</div>
<div class="c n" style="left:190.5px;top:278.6px;width:40.95px">22</div>
<div class="c n" style="left:233.75px;top:278.6px;width:40.95px">4</div>
<div class="c n" style="left:277px;top:278.6px;width:40.95px">4</div>
<div class="c n" style="left:320.25px;top:278.6px;width:40.95px">9</div>
<div class="c n" style="left:363.5px;top:278.6px;width:40.95px">7</div>
<div class="c n" style="left:406.75px;top:278.6px;width:40.55px">9</div>
<div class="c n" style="left:449.6px;top:278.6px;width:50.6px">9</div>
<div class="c n" style="left:502.5px;top:278.6px;width:40.7px">6</div>
<div class="c n" style="left:545.5px;top:278.6px;width:50.2px">5</div>
<div class="c n" style="left:598px;top:278.6px;width:53.2px">4</div>
<div class="c n" style="left:653.5px;top:278.6px;width:112.2px">87</div>
<div class="rn" style="top:292.2px;color:#4a4a4a">11</div>
<div class="c t" style="left:21.6px;top:292.2px">Hannah</div>
<div class="c n" style="left:104px;top:292.2px;width:40.95px">1</div>
<div class="c n" style="left:147.25px;top:292.2px;width:40.95px">1</div>
<div class="c n" style="left:190.5px;top:292.2px;width:40.95px">2</div>
<div class="c n" style="left:233.75px;top:292.2px;width:40.95px">0</div>
<div class="c n" style="left:277px;top:292.2px;width:40.95px">9</div>
<div class="c n" style="left:320.25px;top:292.2px;width:40.95px">0</div>
<div class="c n" style="left:363.5px;top:292.2px;width:40.95px">4</div>
<div class="c n" style="left:406.75px;top:292.2px;width:40.55px">4</div>
<div class="c n" style="left:449.6px;top:292.2px;width:50.6px">15</div>
<div class="c n" style="left:502.5px;top:292.2px;width:40.7px">3</div>
<div class="c n" style="left:545.5px;top:292.2px;width:50.2px">6</div>
<div class="c n" style="left:598px;top:292.2px;width:53.2px">5</div>
<div class="c n" style="left:653.5px;top:292.2px;width:112.2px">50</div>
<div class="rn" style="top:305.8px;color:#4a4a4a">12</div>
<div class="c t" style="left:21.6px;top:305.8px">Susan</div>
<div class="c n" style="left:104px;top:305.8px;width:40.95px">3</div>
<div class="c n" style="left:147.25px;top:305.8px;width:40.95px">4</div>
<div class="c n" style="left:190.5px;top:305.8px;width:40.95px">5</div>
<div class="c n" style="left:233.75px;top:305.8px;width:40.95px">5</div>
<div class="c n" style="left:277px;top:305.8px;width:40.95px">6</div>
<div class="c n" style="left:320.25px;top:305.8px;width:40.95px">3</div>
<div class="c n" style="left:363.5px;top:305.8px;width:40.95px">12</div>
<div class="c n" style="left:406.75px;top:305.8px;width:40.55px">11</div>
<div class="c n" style="left:449.6px;top:305.8px;width:50.6px">4</div>
<div class="c n" style="left:502.5px;top:305.8px;width:40.7px">5</div>
<div class="c n" style="left:545.5px;top:305.8px;width:50.2px">6</div>
<div class="c n" style="left:598px;top:305.8px;width:53.2px">7</div>
<div class="c n" style="left:653.5px;top:305.8px;width:112.2px">71</div>
<div class="rn" style="top:319.4px;color:#4a4a4a">13</div>
<div class="c t" style="left:21.6px;top:319.4px">Brandon</div>
<div class="c n" style="left:104px;top:319.4px;width:40.95px">0</div>
<div class="c n" style="left:147.25px;top:319.4px;width:40.95px">1</div>
<div class="c n" style="left:190.5px;top:319.4px;width:40.95px">4</div>
<div class="c n" style="left:233.75px;top:319.4px;width:40.95px">4</div>
<div class="c n" style="left:277px;top:319.4px;width:40.95px">7</div>
<div class="c n" style="left:320.25px;top:319.4px;width:40.95px">0</div>
<div class="c n" style="left:363.5px;top:319.4px;width:40.95px">7</div>
<div class="c n" style="left:406.75px;top:319.4px;width:40.55px">0</div>
<div class="c n" style="left:449.6px;top:319.4px;width:50.6px">9</div>
<div class="c n" style="left:502.5px;top:319.4px;width:40.7px">8</div>
<div class="c n" style="left:545.5px;top:319.4px;width:50.2px">7</div>
<div class="c n" style="left:598px;top:319.4px;width:53.2px">5</div>
<div class="c n" style="left:653.5px;top:319.4px;width:112.2px">52</div>
<div class="rn" style="top:333px;color:#4a4a4a">14</div>
<div class="c t" style="left:21.6px;top:333px">Cedric</div>
<div class="c n" style="left:104px;top:333px;width:40.95px">6</div>
<div class="c n" style="left:147.25px;top:333px;width:40.95px">6</div>
<div class="c n" style="left:190.5px;top:333px;width:40.95px">13</div>
<div class="c n" style="left:233.75px;top:333px;width:40.95px">4</div>
<div class="c n" style="left:277px;top:333px;width:40.95px">3</div>
<div class="c n" style="left:320.25px;top:333px;width:40.95px">20</div>
<div class="c n" style="left:363.5px;top:333px;width:40.95px">3</div>
<div class="c n" style="left:406.75px;top:333px;width:40.55px">3</div>
<div class="c n" style="left:449.6px;top:333px;width:50.6px">1</div>
<div class="c n" style="left:502.5px;top:333px;width:40.7px">2</div>
<div class="c n" style="left:545.5px;top:333px;width:50.2px">2</div>
<div class="c n" style="left:598px;top:333px;width:53.2px">3</div>
<div class="c n" style="left:653.5px;top:333px;width:112.2px">66</div>
<div class="rn" style="top:346.6px;color:#4a4a4a">15</div>
<div class="c t" style="left:21.6px;top:346.6px">Justin</div>
<div class="c n" style="left:104px;top:346.6px;width:40.95px">6</div>
<div class="c n" style="left:147.25px;top:346.6px;width:40.95px">5</div>
<div class="c n" style="left:190.5px;top:346.6px;width:40.95px">3</div>
<div class="c n" style="left:233.75px;top:346.6px;width:40.95px">19</div>
<div class="c n" style="left:277px;top:346.6px;width:40.95px">8</div>
<div class="c n" style="left:320.25px;top:346.6px;width:40.95px">8</div>
<div class="c n" style="left:363.5px;top:346.6px;width:40.95px">0</div>
<div class="c n" style="left:406.75px;top:346.6px;width:40.55px">0</div>
<div class="c n" style="left:449.6px;top:346.6px;width:50.6px">7</div>
<div class="c n" style="left:502.5px;top:346.6px;width:40.7px">5</div>
<div class="c n" style="left:545.5px;top:346.6px;width:50.2px">4</div>
<div class="c n" style="left:598px;top:346.6px;width:53.2px">24</div>
<div class="c n" style="left:653.5px;top:346.6px;width:112.2px">89</div>
<div class="rn" style="top:360.2px;color:#4a4a4a">16</div>
<div class="c t" style="left:21.6px;top:360.2px">Megan</div>
<div class="c n" style="left:104px;top:360.2px;width:40.95px">3</div>
<div class="c n" style="left:147.25px;top:360.2px;width:40.95px">2</div>
<div class="c n" style="left:190.5px;top:360.2px;width:40.95px">3</div>
<div class="c n" style="left:233.75px;top:360.2px;width:40.95px">8</div>
<div class="c n" style="left:277px;top:360.2px;width:40.95px">6</div>
<div class="c n" style="left:320.25px;top:360.2px;width:40.95px">7</div>
<div class="c n" style="left:363.5px;top:360.2px;width:40.95px">7</div>
<div class="c n" style="left:406.75px;top:360.2px;width:40.55px">0</div>
<div class="c n" style="left:449.6px;top:360.2px;width:50.6px">9</div>
<div class="c n" style="left:502.5px;top:360.2px;width:40.7px">9</div>
<div class="c n" style="left:545.5px;top:360.2px;width:50.2px">0</div>
<div class="c n" style="left:598px;top:360.2px;width:53.2px">0</div>
<div class="c n" style="left:653.5px;top:360.2px;width:112.2px">54</div>
<div class="rn" style="top:373.8px;color:#4a4a4a">17</div>
<div class="c t" style="left:21.6px;top:373.8px">Roger</div>
<div class="c n" style="left:104px;top:373.8px;width:40.95px">4</div>
<div class="c n" style="left:147.25px;top:373.8px;width:40.95px">8</div>
<div class="c n" style="left:190.5px;top:373.8px;width:40.95px">8</div>
<div class="c n" style="left:233.75px;top:373.8px;width:40.95px">6</div>
<div class="c n" style="left:277px;top:373.8px;width:40.95px">2</div>
<div class="c n" style="left:320.25px;top:373.8px;width:40.95px">6</div>
<div class="c n" style="left:363.5px;top:373.8px;width:40.95px">5</div>
<div class="c n" style="left:406.75px;top:373.8px;width:40.55px">5</div>
<div class="c n" style="left:449.6px;top:373.8px;width:50.6px">9</div>
<div class="c n" style="left:502.5px;top:373.8px;width:40.7px">9</div>
<div class="c n" style="left:545.5px;top:373.8px;width:50.2px">5</div>
<div class="c n" style="left:598px;top:373.8px;width:53.2px">0</div>
<div class="c n" style="left:653.5px;top:373.8px;width:112.2px">67</div>
<div class="rn" style="top:387.4px;color:#4a4a4a">18</div>
<div class="c t" style="left:21.6px;top:387.4px">Oliver</div>
<div class="c n" style="left:104px;top:387.4px;width:40.95px">9</div>
<div class="c n" style="left:147.25px;top:387.4px;width:40.95px">5</div>
<div class="c n" style="left:190.5px;top:387.4px;width:40.95px">9</div>
<div class="c n" style="left:233.75px;top:387.4px;width:40.95px">6</div>
<div class="c n" style="left:277px;top:387.4px;width:40.95px">4</div>
<div class="c n" style="left:320.25px;top:387.4px;width:40.95px">6</div>
<div class="c n" style="left:363.5px;top:387.4px;width:40.95px">5</div>
<div class="c n" style="left:406.75px;top:387.4px;width:40.55px">4</div>
<div class="c n" style="left:449.6px;top:387.4px;width:50.6px">4</div>
<div class="c n" style="left:502.5px;top:387.4px;width:40.7px">0</div>
<div class="c n" style="left:545.5px;top:387.4px;width:50.2px">9</div>
<div class="c n" style="left:598px;top:387.4px;width:53.2px">6</div>
<div class="c n" style="left:653.5px;top:387.4px;width:112.2px">67</div>
<div class="rn" style="top:401px;color:#1e7145">19</div>
<div class="c t" style="left:21.6px;top:401px">Marcus</div>
<div class="c n" style="left:104px;top:401px;width:40.95px">2</div>
<div class="c n" style="left:147.25px;top:401px;width:40.95px">1</div>
<div class="c n" style="left:190.5px;top:401px;width:40.95px">0</div>
<div class="c n" style="left:233.75px;top:401px;width:40.95px">0</div>
<div class="c n" style="left:277px;top:401px;width:40.95px">8</div>
<div class="c n" style="left:320.25px;top:401px;width:40.95px">8</div>
<div class="c n" style="left:363.5px;top:401px;width:40.95px">4</div>
<div class="c n" style="left:406.75px;top:401px;width:40.55px">3</div>
<div class="c n" style="left:449.6px;top:401px;width:50.6px">2</div>
<div class="c n" style="left:502.5px;top:401px;width:40.7px">3</div>
<div class="c n" style="left:545.5px;top:401px;width:50.2px">3</div>
<div class="c n" style="left:598px;top:401px;width:53.2px">1</div>
<div class="c n" style="left:653.5px;top:401px;width:112.2px">35</div>
<div class="rn" style="top:414.6px;color:#1e7145">20</div>
<div class="c t" style="left:21.6px;top:414.6px">Terry</div>
<div class="c n" style="left:104px;top:414.6px;width:40.95px">4</div>
<div class="c n" style="left:147.25px;top:414.6px;width:40.95px">0</div>
<div class="c n" style="left:190.5px;top:414.6px;width:40.95px">0</div>
<div class="c n" style="left:233.75px;top:414.6px;width:40.95px">0</div>
<div class="c n" style="left:277px;top:414.6px;width:40.95px">3</div>
<div class="c n" style="left:320.25px;top:414.6px;width:40.95px">11</div>
<div class="c n" style="left:363.5px;top:414.6px;width:40.95px">12</div>
<div class="c n" style="left:406.75px;top:414.6px;width:40.55px">6</div>
<div class="c n" style="left:449.6px;top:414.6px;width:50.6px">5</div>
<div class="c n" style="left:502.5px;top:414.6px;width:40.7px">4</div>
<div class="c n" style="left:545.5px;top:414.6px;width:50.2px">4</div>
<div class="c n" style="left:598px;top:414.6px;width:53.2px">24</div>
<div class="c n" style="left:653.5px;top:414.6px;width:112.2px">73</div>
<div class="rn" style="top:428.2px;color:#1e7145">21</div>
<div class="c t" style="left:21.6px;top:428.2px">Mandy</div>
<div class="c n" style="left:104px;top:428.2px;width:40.95px">5</div>
<div class="c n" style="left:147.25px;top:428.2px;width:40.95px">4</div>
<div class="c n" style="left:190.5px;top:428.2px;width:40.95px">6</div>
<div class="c n" style="left:233.75px;top:428.2px;width:40.95px">7</div>
<div class="c n" style="left:277px;top:428.2px;width:40.95px">9</div>
<div class="c n" style="left:320.25px;top:428.2px;width:40.95px">0</div>
<div class="c n" style="left:363.5px;top:428.2px;width:40.95px">5</div>
<div class="c n" style="left:406.75px;top:428.2px;width:40.55px">4</div>
<div class="c n" style="left:449.6px;top:428.2px;width:50.6px">3</div>
<div class="c n" style="left:502.5px;top:428.2px;width:40.7px">3</div>
<div class="c n" style="left:545.5px;top:428.2px;width:50.2px">3</div>
<div class="c n" style="left:598px;top:428.2px;width:53.2px">2</div>
<div class="c n" style="left:653.5px;top:428.2px;width:112.2px">51</div>
<div class="rn" style="top:441.8px;color:#1e7145">22</div>
<div class="c t" style="left:21.6px;top:441.8px">Samuel</div>
<div class="c n" style="left:104px;top:441.8px;width:40.95px">4</div>
<div class="c n" style="left:147.25px;top:441.8px;width:40.95px">6</div>
<div class="c n" style="left:190.5px;top:441.8px;width:40.95px">12</div>
<div class="c n" style="left:233.75px;top:441.8px;width:40.95px">15</div>
<div class="c n" style="left:277px;top:441.8px;width:40.95px">3</div>
<div class="c n" style="left:320.25px;top:441.8px;width:40.95px">5</div>
<div class="c n" style="left:363.5px;top:441.8px;width:40.95px">6</div>
<div class="c n" style="left:406.75px;top:441.8px;width:40.55px">7</div>
<div class="c n" style="left:449.6px;top:441.8px;width:50.6px">3</div>
<div class="c n" style="left:502.5px;top:441.8px;width:40.7px">2</div>
<div class="c n" style="left:545.5px;top:441.8px;width:50.2px">9</div>
<div class="c n" style="left:598px;top:441.8px;width:53.2px">8</div>
<div class="c n" style="left:653.5px;top:441.8px;width:112.2px">80</div>
<div class="rn" style="top:455.4px;color:#1e7145">23</div>
<div class="c t" style="left:21.6px;top:455.4px">Cho</div>
<div class="c n" style="left:104px;top:455.4px;width:40.95px">4</div>
<div class="c n" style="left:147.25px;top:455.4px;width:40.95px">5</div>
<div class="c n" style="left:190.5px;top:455.4px;width:40.95px">2</div>
<div class="c n" style="left:233.75px;top:455.4px;width:40.95px">1</div>
<div class="c n" style="left:277px;top:455.4px;width:40.95px">3</div>
<div class="c n" style="left:320.25px;top:455.4px;width:40.95px">2</div>
<div class="c n" style="left:363.5px;top:455.4px;width:40.95px">1</div>
<div class="c n" style="left:406.75px;top:455.4px;width:40.55px">5</div>
<div class="c n" style="left:449.6px;top:455.4px;width:50.6px">6</div>
<div class="c n" style="left:502.5px;top:455.4px;width:40.7px">5</div>
<div class="c n" style="left:545.5px;top:455.4px;width:50.2px">6</div>
<div class="c n" style="left:598px;top:455.4px;width:53.2px">4</div>
<div class="c n" style="left:653.5px;top:455.4px;width:112.2px">44</div>
<div class="rn" style="top:469px;color:#1e7145">24</div>
<div class="c t" style="left:21.6px;top:469px">Michael</div>
<div class="c n" style="left:104px;top:469px;width:40.95px">2</div>
<div class="c n" style="left:147.25px;top:469px;width:40.95px">1</div>
<div class="c n" style="left:190.5px;top:469px;width:40.95px">0</div>
<div class="c n" style="left:233.75px;top:469px;width:40.95px">0</div>
<div class="c n" style="left:277px;top:469px;width:40.95px">8</div>
<div class="c n" style="left:320.25px;top:469px;width:40.95px">8</div>
<div class="c n" style="left:363.5px;top:469px;width:40.95px">4</div>
<div class="c n" style="left:406.75px;top:469px;width:40.55px">3</div>
<div class="c n" style="left:449.6px;top:469px;width:50.6px">2</div>
<div class="c n" style="left:502.5px;top:469px;width:40.7px">3</div>
<div class="c n" style="left:545.5px;top:469px;width:50.2px">3</div>
<div class="c n" style="left:598px;top:469px;width:53.2px">1</div>
<div class="c n" style="left:653.5px;top:469px;width:112.2px">35</div>
<div class="rn" style="top:482.6px;color:#1e7145">25</div>
<div class="c t" style="left:21.6px;top:482.6px">Stephen</div>
<div class="c n" style="left:104px;top:482.6px;width:40.95px">4</div>
<div class="c n" style="left:147.25px;top:482.6px;width:40.95px">0</div>
<div class="c n" style="left:190.5px;top:482.6px;width:40.95px">0</div>
<div class="c n" style="left:233.75px;top:482.6px;width:40.95px">0</div>
<div class="c n" style="left:277px;top:482.6px;width:40.95px">3</div>
<div class="c n" style="left:320.25px;top:482.6px;width:40.95px">11</div>
<div class="c n" style="left:363.5px;top:482.6px;width:40.95px">12</div>
<div class="c n" style="left:406.75px;top:482.6px;width:40.55px">6</div>
<div class="c n" style="left:449.6px;top:482.6px;width:50.6px">5</div>
<div class="c n" style="left:502.5px;top:482.6px;width:40.7px">4</div>
<div class="c n" style="left:545.5px;top:482.6px;width:50.2px">4</div>
<div class="c n" style="left:598px;top:482.6px;width:53.2px">24</div>
<div class="c n" style="left:653.5px;top:482.6px;width:112.2px">73</div>
<div class="rn" style="top:496.2px;color:#1e7145">26</div>
<div class="c t" style="left:21.6px;top:496.2px">Marietta</div>
<div class="c n" style="left:104px;top:496.2px;width:40.95px">5</div>
<div class="c n" style="left:147.25px;top:496.2px;width:40.95px">4</div>
<div class="c n" style="left:190.5px;top:496.2px;width:40.95px">6</div>
<div class="c n" style="left:233.75px;top:496.2px;width:40.95px">7</div>
<div class="c n" style="left:277px;top:496.2px;width:40.95px">9</div>
<div class="c n" style="left:320.25px;top:496.2px;width:40.95px">0</div>
<div class="c n" style="left:363.5px;top:496.2px;width:40.95px">5</div>
<div class="c n" style="left:406.75px;top:496.2px;width:40.55px">4</div>
<div class="c n" style="left:449.6px;top:496.2px;width:50.6px">3</div>
<div class="c n" style="left:502.5px;top:496.2px;width:40.7px">3</div>
<div class="c n" style="left:545.5px;top:496.2px;width:50.2px">3</div>
<div class="c n" style="left:598px;top:496.2px;width:53.2px">2</div>
<div class="c n" style="left:653.5px;top:496.2px;width:112.2px">51</div>
<div class="rn" style="top:509.8px;color:#4a4a4a">27</div>
<div class="c t" style="left:21.6px;top:509.8px">Miles</div>
<div class="c n" style="left:104px;top:509.8px;width:40.95px">3</div>
<div class="c n" style="left:147.25px;top:509.8px;width:40.95px">4</div>
<div class="c n" style="left:190.5px;top:509.8px;width:40.95px">18</div>
<div class="c n" style="left:233.75px;top:509.8px;width:40.95px">12</div>
<div class="c n" style="left:277px;top:509.8px;width:40.95px">9</div>
<div class="c n" style="left:320.25px;top:509.8px;width:40.95px">8</div>
<div class="c n" style="left:363.5px;top:509.8px;width:40.95px">6</div>
<div class="c n" style="left:406.75px;top:509.8px;width:40.55px">6</div>
<div class="c n" style="left:449.6px;top:509.8px;width:50.6px">5</div>
<div class="c n" style="left:502.5px;top:509.8px;width:40.7px">4</div>
<div class="c n" style="left:545.5px;top:509.8px;width:50.2px">3</div>
<div class="c n" style="left:598px;top:509.8px;width:53.2px">2</div>
<div class="c n" style="left:653.5px;top:509.8px;width:112.2px">80</div>
<div style="left:18.2px;top:155.2px;width:1.3px;height:138px;background:#1e7145"></div>
<div style="left:18.2px;top:401px;width:1.3px;height:108.8px;background:#1e7145"></div>
<div style="left:19.5px;top:291.2px;width:387.25px;height:1.2px;background:#f4f4f4"></div>
<div style="left:19.5px;top:508.8px;width:387.25px;height:1.2px;background:#f4f4f4"></div>
<div style="left:2.4px;top:396px;width:15.9px;height:4.9px;background:rgba(0,0,0,.07)"></div>
<div style="left:19.7px;top:396px;width:84.3px;height:4.9px;background:rgba(0,0,0,.21)"></div>
<div style="left:104px;top:396px;width:302.95px;height:4.5px;background:rgba(0,0,0,.21)"></div>
<div style="left:104px;top:400.4px;width:302.75px;height:0.7px;background:#b0b0b0"></div>
<div style="left:104px;top:401.1px;width:302.75px;height:0.8px;background:#dcdcdc"></div>
<div style="left:-0.4px;top:150.9px;width:408.4px;height:145.8px;border:3px solid #f83a3a;box-sizing:border-box;filter:drop-shadow(.8px 1.6px 1.2px rgba(0,0,0,.32))"></div>
<div style="left:-0.4px;top:394.1px;width:405.8px;height:118.5px;border:2.8px solid #f83a3a;box-sizing:border-box;filter:drop-shadow(.8px 1.6px 1.2px rgba(0,0,0,.32))"></div>
<div style="left:0px;top:522.2px;width:768px;height:3.8px;background:#eeeeee"></div>
<div style="left:97px;top:524px;width:50px;height:3px;background:#e4e4e4"></div>
<div style="left:-4px;top:524px;width:101px;height:6px;background:#fff;border-radius:3px"></div>
<div style="left:147px;top:524px;width:633px;height:6px;background:#f4f4f4;border-radius:3px"></div>
</div>
<!-- ======= DROPDOWN MENU ======= -->
<div style="left:274.8px;top:91.6px;width:123.6px;height:50.4px;background:#fff;border:1px solid #b6b6b6;border-radius:4px;box-sizing:border-box;box-shadow:0 2px 5px rgba(0,0,0,.18)"></div>
<div style="left:281px;top:96.4px;width:95px;height:19px;background:#f0f0f0"></div>
<div style="left:376px;top:108.6px;width:21.4px;height:8px;background:#ededed;border-radius:0 0 3px 0"></div>
<div style="left:279.6px;top:94.7px;width:96.9px;height:22px;border:2.6px solid #ee3f3f;box-sizing:border-box;box-shadow:0 0 2px rgba(234,69,69,.75), .6px 1.2px 2px rgba(0,0,0,.25)"></div>
<svg style="left:287.6px;top:96.8px" width="14" height="15" viewBox="0 0 14 15">
  <path d="M1.4 1.2 H6 L9 4.2 V6.4" fill="none" stroke="#555" stroke-width="1"/>
  <path d="M6 1.2 V4.2 H9" fill="none" stroke="#444" stroke-width="1"/>
  <path d="M1.4 1.2 V12.4 H4.6" fill="none" stroke="#555" stroke-width="1"/>
  <path d="M3.2 2.6 V10.8" fill="none" stroke="#2f8fdc" stroke-width="1.1"/>
  <rect x="6" y="6" width="4.6" height="2.6" fill="#fff" stroke="#444" stroke-width="1"/>
  <rect x="4.6" y="8.2" width="7.4" height="3.4" fill="#fff" stroke="#444" stroke-width="1"/>
  <rect x="6" y="10.6" width="4.6" height="3" fill="#fff" stroke="#444" stroke-width="1"/>
</svg>
<div class="lbl l" style="left:307.6px;top:98.4px;font-size:9.9px;color:#2b2b2b"><span style="text-decoration:underline">S</span>et Print Area</div>
<div class="lbl l" style="left:307.6px;top:122.4px;font-size:9.9px;color:#2b2b2b"><span style="text-decoration:underline">C</span>lear Print Area</div>
<svg style="left:375px;top:109.6px" width="13" height="18" viewBox="0 0 13 18">
  <path d="M1.4 1.2 V13.6 L4.4 10.8 L6.8 16.2 L9 15.2 L6.7 10 H10.8 Z" fill="#fff" stroke="#333" stroke-width="1" stroke-linejoin="round"/>
</svg>

</div>
</body>
</html>
